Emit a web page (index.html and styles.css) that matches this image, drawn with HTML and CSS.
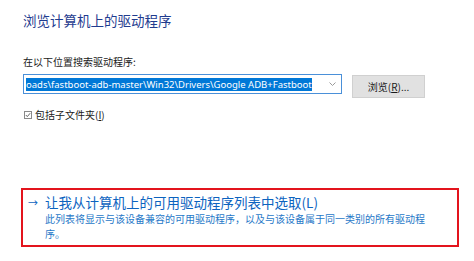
FILE: index.html
```html
<!DOCTYPE HTML><html>
<head>
  <title>浏览计算机上的驱动程序</title>
  <meta name="viewport" content="width=device-width, initial-scale=1">
  <link rel="stylesheet" href="styles.css">
</head>
<body>
  <div class="page">
    <h1 class="title">浏览计算机上的驱动程序</h1>
    <p class="label">在以下位置搜索驱动程序:</p>
    <div class="pathrow">
      <div class="combo">
        <span class="path"><span class="sel">oads\fastboot-adb-master\Win32\Drivers\Google ADB+Fastboot</span></span>
        <svg class="arrow" width="7" height="4" viewBox="0 0 7 4"><path d="M0.5 0.5 L3.5 3.5 L6.5 0.5" fill="none" stroke="#9a9a9a" stroke-width="1"/></svg>
      </div>
      <button class="button">浏览(<u>R</u>)...</button>
    </div>
    <div class="check">
      <svg class="box" width="8" height="8" viewBox="0 0 8 8"><rect x="0.5" y="0.5" width="7" height="7" fill="#fff" stroke="#8a8a8a"/><path d="M1.8 4 L3.3 5.6 L6.2 2.2" fill="none" stroke="#555" stroke-width="0.9"/></svg>
      <span>包括子文件夹(<u>I</u>)</span>
    </div>
    <div class="pick">
      <div class="picktitle"><span class="go">→</span><span>让我从计算机上的可用驱动程序列表中选取(L)</span></div>
      <p class="pickdesc">此列表将显示与该设备兼容的可用驱动程序，以及与该设备属于同一类别的所有驱动程序。</p>
    </div>
  </div>
</body>
</html>
```

FILE: styles.css
```css
html {
  font-family: "Noto Sans CJK SC", "Noto Sans", sans-serif;
  color: #1a1a1a;
}
body {
  margin: 0;
  background-color: #fff;
}
.page {
  padding: 10px 0 0 23px;
}
.title {
  margin: 0;
  font-size: 13.5px;
  font-weight: normal;
  line-height: 20px;
  color: #1f3c8f;
}
.label {
  margin: 25px 0 0 0;
  font-size: 10px;
  line-height: 14px;
}
.pathrow {
  display: flex;
  align-items: flex-start;
  gap: 10px;
  margin-top: 5px;
}
.combo {
  width: 315px;
  height: 18px;
  border: 1px solid #4a90d9;
  display: flex;
  align-items: center;
  padding-left: 2px;
  box-sizing: content-box;
}
.path {
  flex: 1;
  white-space: nowrap;
  font-family: "Noto Sans", sans-serif;
  font-size: 9.5px;
  line-height: 11px;
}
.sel {
  background-color: #0078d7;
  color: #fff;
}
.arrow {
  margin: 0 5px 0 4px;
}
.button {
  margin-top: 1px;
  width: 73px;
  height: 23px;
  padding: 0;
  font-family: "Noto Sans CJK SC", "Noto Sans", sans-serif;
  font-size: 10px;
  color: #1a1a1a;
  background-color: #e1e1e1;
  border: 1px solid #d0d0d0;
  border-radius: 0;
}
.check {
  display: flex;
  align-items: center;
  gap: 3px;
  margin-top: 10px;
  font-size: 10px;
  line-height: 14px;
  padding-left: 1px;
}
.pick {
  margin: 66px 0 0 -2px;
  width: 434px;
  height: 55px;
  border: 2px solid #e3141d;
  color: #0c63bf;
  box-sizing: content-box;
}
.picktitle {
  display: flex;
  align-items: center;
  padding: 4px 0 0 5px;
  font-size: 13.5px;
  line-height: 17px;
}
.go {
  width: 17px;
  font-size: 10px;
}
.pickdesc {
  margin: 0 0 0 22px;
  width: 386px;
  font-size: 10px;
  line-height: 15px;
  color: #1f78c8;
}
```
